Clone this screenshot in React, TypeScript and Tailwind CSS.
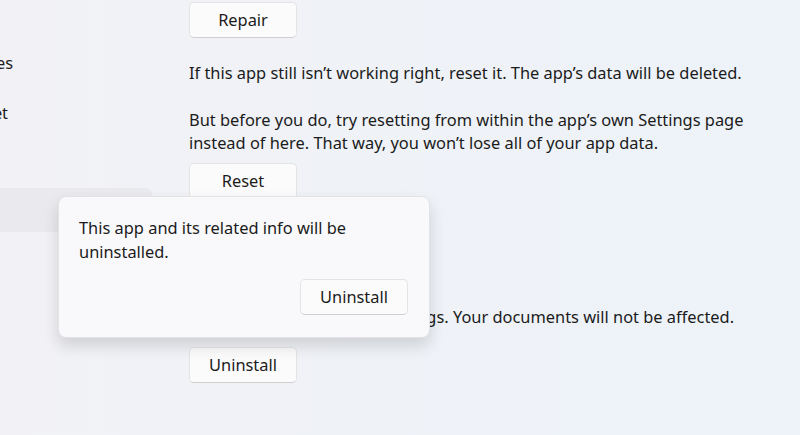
const font = { fontFamily: '"Noto Sans", "Open Sans", sans-serif' };

function WinButton({ label }: { label: string }) {
  return (
    <button className="h-9 w-[108px] rounded-[5px] border border-[#e4e4e4] border-b-[#cfcfcf] bg-[#fbfbfb] text-[16.4px] text-[#1b1b1b]">
      {label}
    </button>
  );
}

function Sidebar() {
  return (
    <div className="w-[152px] shrink-0 overflow-hidden">
      <div className="ml-[-160px] flex flex-col gap-[6px] pt-[41px] text-[16.4px] text-[#1b1b1b]">
        <div className="flex h-[44px] items-center pl-[20px]">Bluetooth &amp; devices</div>
        <div className="flex h-[44px] items-center pl-[20px]">Network &amp; internet</div>
        <div className="flex h-[44px] items-center pl-[20px]">Personalization</div>
        <div className="-mt-[3px] flex h-[44px] items-center rounded-[6px] bg-[#e9e9ee] pl-[20px]">Apps</div>
      </div>
    </div>
  );
}

export default function App() {
  return (
    <div
      style={font}
      className="relative flex h-[435px] w-[800px] overflow-hidden bg-gradient-to-r from-[#f2f2f6] via-[#eff2f7] to-[#edf3f9]"
    >
      <Sidebar />
      <div className="ml-[37px] flex flex-col pt-[2px] text-[16.4px] leading-[24px] text-[#1b1b1b]">
        <WinButton label="Repair" />
        <p className="mt-[23px]">If this app still isn’t working right, reset it. The app’s data will be deleted.</p>
        <p className="mt-[23px] w-[560px] leading-[23px]">
          But before you do, try resetting from within the app’s own Settings page instead of here. That way, you won’t lose all of your app data.
        </p>
        <div className="mt-[9px]">
          <WinButton label="Reset" />
        </div>
        <h3 className="mt-[72px] text-[20px] font-semibold">Uninstall</h3>
        <p className="mt-[10px]">Uninstall this app and its settings. Your documents will not be affected.</p>
        <div className="mt-[18px]">
          <WinButton label="Uninstall" />
        </div>
      </div>

      <div className="absolute left-[58px] top-[196px] flex h-[142px] w-[372px] flex-col rounded-[8px] border border-[#e3e3e6] bg-[#f9f9fb] px-[20px] pt-[19px] shadow-[0_8px_16px_rgba(0,0,0,0.14)]">
        <p className="text-[16.4px] leading-[24px] text-[#1b1b1b]">
          This app and its related info will be
          <br />
          uninstalled.
        </p>
        <div className="mt-[15px] flex justify-end pr-px">
          <WinButton label="Uninstall" />
        </div>
      </div>
    </div>
  );
}
